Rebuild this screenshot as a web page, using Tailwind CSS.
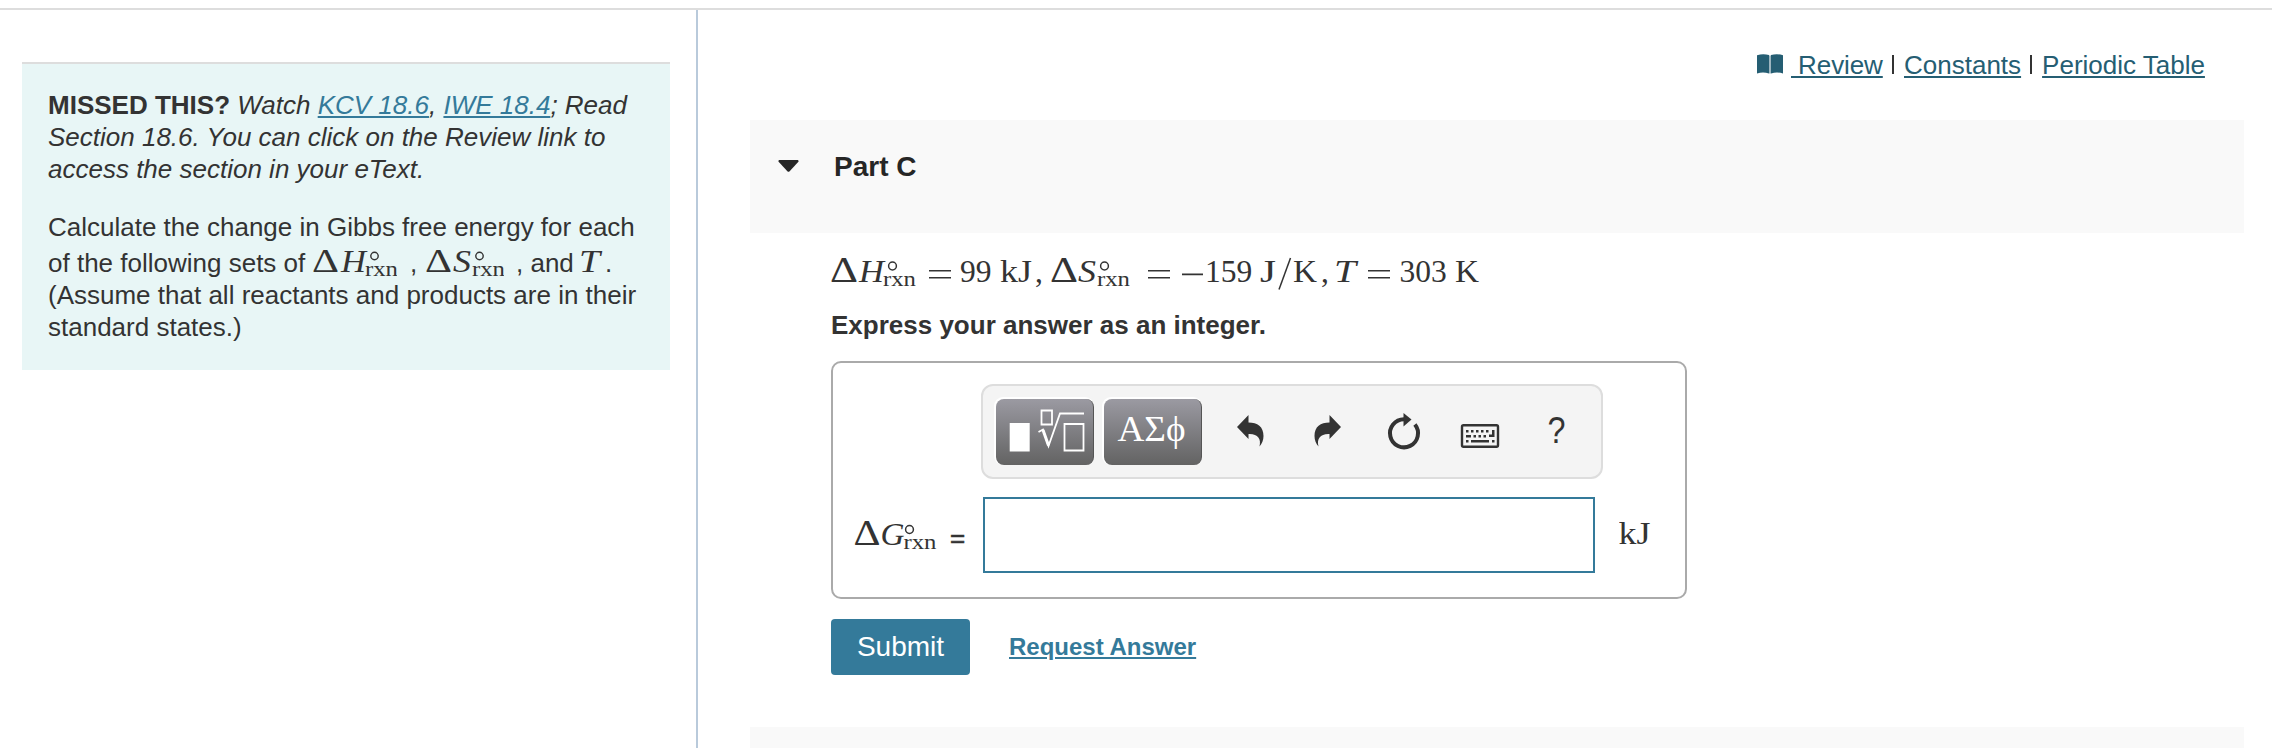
<!DOCTYPE html>
<html lang="en">
<head>
    <meta charset="UTF-8">
    <title>Part C</title>
    <script src="https://cdn.jsdelivr.net/npm/@tailwindcss/browser@4"></script>
</head>
<body class="bg-white text-[#333] text-[26px] leading-8 font-['Liberation_Sans',Arial,sans-serif]">
<div class="mt-2 flex h-[740px] overflow-hidden border-t-2 border-[#ddd]">

    <!-- Problem statement -->
    <aside class="w-[698px] shrink-0 border-r-2 border-[#b9cadb] pt-[52px] pl-[22px]">
        <div class="h-[308px] w-[648px] border-t-2 border-[#ddd] bg-[#e8f6f6] pt-[25px] pl-[26px] whitespace-nowrap">
            <p class="italic">
                <b class="not-italic">MISSED THIS?</b> Watch <a href="#" class="text-[#347a9a] underline underline-offset-2 decoration-2">KCV 18.6</a>, <a href="#" class="text-[#347a9a] underline underline-offset-2 decoration-2">IWE 18.4</a>; Read<br>
                Section 18.6. You can click on the Review link to<br>
                access the section in your eText.
            </p>
            <div class="mt-[26px]">
                <p>Calculate the change in Gibbs free energy for each</p>
                <div class="flex h-9 items-end">
                    <span class="w-[265px]">of the following sets of</span>
                    <svg class="h-9 w-[84px]" viewBox="0 0 84 36" fill="#333" font-family="Liberation Serif, serif" font-size="31">
                        <text x="-1" y="29" font-size="34" textLength="27" lengthAdjust="spacingAndGlyphs">Δ</text>
                        <text x="28" y="29" font-style="italic" textLength="25" lengthAdjust="spacingAndGlyphs">H</text>
                        <text x="52" y="33" font-size="22" textLength="33" lengthAdjust="spacingAndGlyphs">rxn</text>
                        <circle cx="61.5" cy="13" r="3.7" fill="none" stroke="#333" stroke-width="1.4"/>
                    </svg>
                    <span class="ml-[13px] w-4">,</span>
                    <svg class="h-9 w-[78px]" viewBox="0 0 78 36" fill="#333" font-family="Liberation Serif, serif" font-size="31">
                        <text x="-1" y="29" font-size="34" textLength="27" lengthAdjust="spacingAndGlyphs">Δ</text>
                        <text x="27" y="29" font-style="italic" textLength="18" lengthAdjust="spacingAndGlyphs">S</text>
                        <text x="46" y="33" font-size="22" textLength="33" lengthAdjust="spacingAndGlyphs">rxn</text>
                        <circle cx="53.5" cy="13" r="3.7" fill="none" stroke="#333" stroke-width="1.4"/>
                    </svg>
                    <span class="ml-[12px] w-[63px]">, and</span>
                    <svg class="h-9 w-[26px]" viewBox="0 0 26 36" fill="#333" font-family="Liberation Serif, serif" font-size="31">
                        <text x="0" y="29" font-style="italic" textLength="21" lengthAdjust="spacingAndGlyphs">T</text>
                    </svg>
                    <span>.</span>
                </div>
                <p>(Assume that all reactants and products are in their<br>standard states.)</p>
            </div>
        </div>
    </aside>

    <main class="flex-1 pr-7 pl-[52px]">
        <nav class="flex h-[110px] items-start pt-[39px] pl-[1007px] whitespace-nowrap text-[#255e73]">
            <svg class="mt-[5px] h-[20px] w-[26px]" viewBox="0 0 26 20" fill="#255e73">
                <path d="M0 1.2Q6-.8 12 1V19.4Q6 17.8 0 19.4ZM14 1Q20-.8 26 1.2V19.4Q20 17.8 14 19.4Z"/>
                <path d="M12 1.5h2v18h-2z" opacity=".45"/>
            </svg>
            <a href="#" class="ml-2 w-[92px] tracking-[-0.1px] underline decoration-2 underline-offset-2">&nbsp;Review</a>
            <span class="mt-[6px] ml-[9px] h-[19px] w-[2px] bg-[#333]"></span>
            <a href="#" class="ml-[10px] underline decoration-2 underline-offset-2">Constants</a>
            <span class="mt-[6px] ml-[9px] h-[19px] w-[2px] bg-[#333]"></span>
            <a href="#" class="ml-[10px] underline decoration-2 underline-offset-2">Periodic Table</a>
        </nav>

        <header class="flex h-[113px] items-start bg-[#f9f9f9] pt-[30px] pl-7 text-[#262626]">
            <svg class="mt-[10px] h-3 w-[21px]" viewBox="0 0 21 12" fill="#262626">
                <path d="M1.2 0h18.6q1.2.6.6 1.8l-9 9.6q-.9.9-1.8 0L.6 1.8Q0 .6 1.2 0z"/>
            </svg>
            <h2 class="mt-px ml-[35px] text-[28px] leading-[32px] font-bold">Part C</h2>
        </header>

        <section class="pl-[81px]">
            <svg class="mt-5 block h-10 w-[660px]" viewBox="831 253 660 40" fill="#333" font-family="Liberation Serif, serif" font-size="31.5">
                <text x="830" y="282" font-size="35" textLength="28" lengthAdjust="spacingAndGlyphs">Δ</text>
                <text x="859" y="282" font-style="italic" textLength="25" lengthAdjust="spacingAndGlyphs">H</text>
                <text x="883" y="286" font-size="22" textLength="33" lengthAdjust="spacingAndGlyphs">rxn</text>
                <circle cx="892.5" cy="275" r="3.9" fill="none" stroke="#333" stroke-width="1.5" transform="translate(0 -9)"/>
                <path d="M929 279h22v1.6h-22zM929 272h22v1.6h-22z" transform="translate(0 -2)"/>
                <text x="960" y="282">99</text>
                <text x="1000" y="282" textLength="32" lengthAdjust="spacingAndGlyphs">kJ</text>
                <text x="1035" y="282">,</text>
                <text x="1050" y="282" font-size="35" textLength="28" lengthAdjust="spacingAndGlyphs">Δ</text>
                <text x="1078" y="282" font-style="italic" textLength="18" lengthAdjust="spacingAndGlyphs">S</text>
                <text x="1097" y="286" font-size="22" textLength="33" lengthAdjust="spacingAndGlyphs">rxn</text>
                <circle cx="1104.5" cy="266" r="3.9" fill="none" stroke="#333" stroke-width="1.5"/>
                <path d="M1148 270h22v1.6h-22zM1148 277h22v1.6h-22zM1182 273.6h21v1.6h-21z"/>
                <text x="1205" y="282">159</text>
                <text x="1260" y="282" textLength="16" lengthAdjust="spacingAndGlyphs">J</text>
                <path d="M1279 289.5 1290.5 258" stroke="#333" stroke-width="1.5"/>
                <text x="1293" y="282" textLength="24" lengthAdjust="spacingAndGlyphs">K</text>
                <text x="1321" y="282">,</text>
                <text x="1334" y="282" font-style="italic" textLength="22" lengthAdjust="spacingAndGlyphs">T</text>
                <path d="M1368 270h22v1.6h-22zM1368 277h22v1.6h-22z"/>
                <text x="1399.5" y="282">303</text>
                <text x="1455" y="282" textLength="24" lengthAdjust="spacingAndGlyphs">K</text>
            </svg>
            <p class="mt-4 font-bold">Express your answer as an integer.</p>

            <!-- Answer box -->
            <div class="mt-5 h-[238px] w-[856px] rounded-[10px] border-2 border-[#aaa] pt-[21px]">
                <div class="ml-[148px] flex h-[95px] w-[622px] rounded-[12px] border-2 border-[#ddd] bg-[#f4f4f4] pt-[13px] pl-[13px]">
                    <button class="h-[66px] w-[98px] rounded-lg border-r border-[#555] bg-linear-to-b from-[#9b9aa2] to-[#636363] shadow-[-1px_-1px_0_1px_#fff]">
                        <svg class="block h-[66px] w-[97px]" viewBox="996 399 97 66" fill="none" stroke="#fff" stroke-width="1.8">
                            <path d="M1009.7 423h20v28.5h-20z" fill="#fff" stroke="none"/>
                            <path d="M1041.5 410.5h10.5v14h-10.5zM1064.5 424h19v26.5h-19z"/>
                            <path d="M1038.5 432l4.500-2.500 5.500 16.500 11.500-32.500h24"/>
                            <path d="M1043 430l5.500 15.500" stroke-width="3"/>
                        </svg>
                    </button>
                    <button class="ml-[10px] h-[66px] w-[98px] rounded-lg border-r border-[#555] bg-linear-to-b from-[#9b9aa2] to-[#636363] shadow-[-1px_-1px_0_1px_#fff]">
                        <svg class="block h-[66px] w-[97px]" viewBox="1104 399 97 66" fill="#fff" font-family="Liberation Serif, serif" font-size="36">
                            <text x="1117.5" y="441" textLength="68" lengthAdjust="spacingAndGlyphs">ΑΣϕ</text>
                        </svg>
                    </button>
                    <svg class="h-[66px] w-[376px]" viewBox="1202 399 376 66" fill="#333">
                        <path d="M1237 427l11.500-12v7.500c9 0 15 4 15 13.500 0 4-1.500 8-4 10.500 2-8-2-13-11-12.500v5z"/>
                        <path d="M1341 427l-11.500-12v7.500c-9 0-15 4-15 13.500 0 4 1.500 8 4 10.500-2-8 2-13 11-12.500v5z"/>
                        <path d="M1404 419.300a14 14 0 1 0 10.900 5.200" fill="none" stroke="#333" stroke-width="4"/>
                        <path d="M1403.500 413l8 6.500-8 7z"/>
                        <rect x="1462" y="425.3" width="36" height="21.5" rx="1.5" fill="none" stroke="#333" stroke-width="2.4"/>
                        <path d="M1466 430h2.500v2.500h-2.500zM1471 430h2.500v2.500h-2.500zM1476 430h2.500v2.500h-2.500zM1481 430h2.500v2.500h-2.500zM1486 430h2.500v2.500h-2.500zM1492 430h2.500v7h-5.500v-2.500h3zM1466 435h5v2.500h-5zM1473.500 435h2.500v2.500h-2.500zM1478.500 435h2.500v2.500h-2.500zM1483.500 435h2.500v2.500h-2.500zM1466 440h2.500v2.500h-2.500zM1471 440h18v2.500h-18zM1492 440h2.500v2.500h-2.500z"/>
                        <text x="1547.5" y="443" font-family="Liberation Sans, sans-serif" font-size="36" textLength="18" lengthAdjust="spacingAndGlyphs">?</text>
                    </svg>
                </div>
                <div class="mt-[18px] flex h-[76px]">
                    <svg class="h-[76px] w-[150px]" viewBox="833 497 150 76" fill="#333" font-family="Liberation Serif, serif" font-size="31.5">
                        <text x="853.5" y="545" font-size="35" textLength="27" lengthAdjust="spacingAndGlyphs">Δ</text>
                        <text x="880.5" y="545" font-style="italic" textLength="24" lengthAdjust="spacingAndGlyphs">G</text>
                        <text x="903.5" y="549" font-size="22" textLength="33" lengthAdjust="spacingAndGlyphs">rxn</text>
                        <circle cx="909.5" cy="529.5" r="3.9" fill="none" stroke="#333" stroke-width="1.5"/>
                        <text x="950" y="546.5" font-family="Liberation Sans, sans-serif" font-size="26" stroke="#333" stroke-width=".6">=</text>
                    </svg>
                    <input type="text" class="h-[76px] w-[612px] border-2 border-[#347a9a] bg-white">
                    <svg class="ml-6 h-[76px] w-10" viewBox="1619 497 40 76" fill="#333" font-family="Liberation Serif, serif" font-size="31.5">
                        <text x="1618.5" y="544" textLength="32" lengthAdjust="spacingAndGlyphs">kJ</text>
                    </svg>
                </div>
            </div>

            <div class="mt-5 flex items-center">
                <button class="h-14 w-[139px] rounded bg-[#347a9a] text-[28px] text-white">Submit</button>
                <a href="#" class="ml-[39px] text-2xl font-bold text-[#347a9a] underline decoration-2 underline-offset-2">Request Answer</a>
            </div>
        </section>

        <div class="mt-[52px] h-[60px] bg-[#f9f9f9]"></div>
    </main>
</div>
</body>
</html>
